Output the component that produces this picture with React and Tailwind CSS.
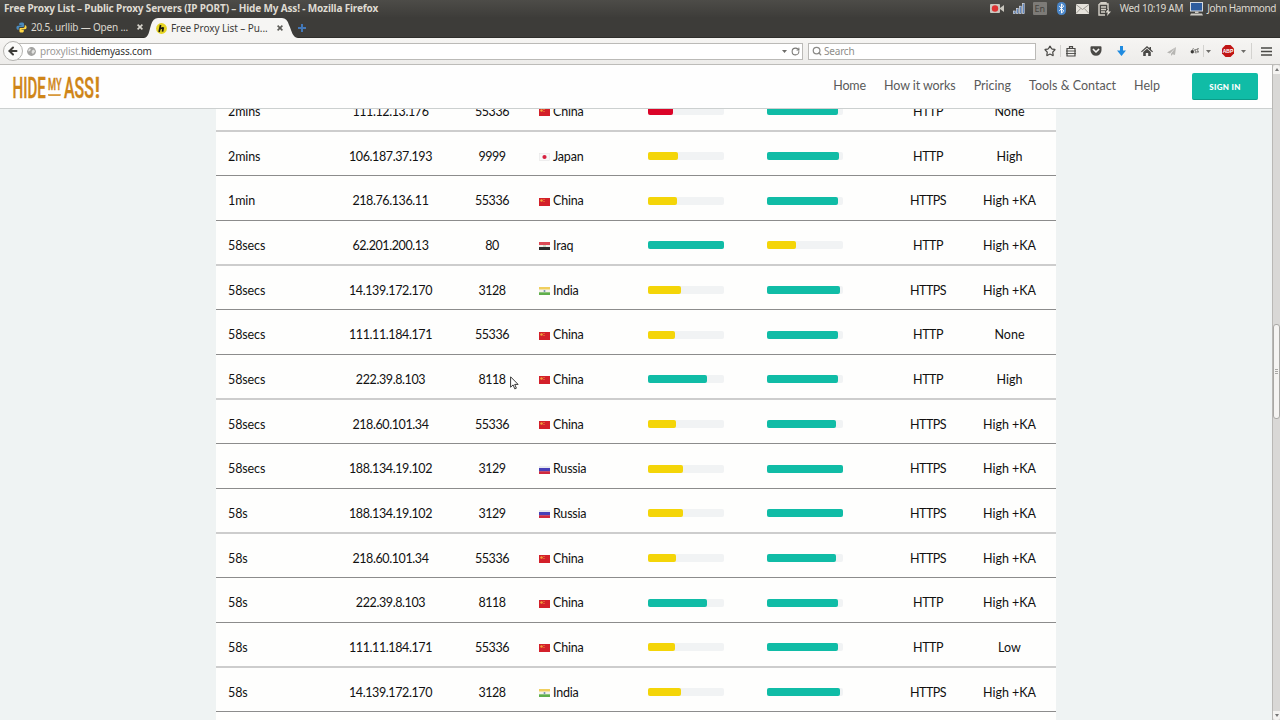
import { ArrowLeft, Search, Star, RotateCw } from "lucide-react";

const RED = "bg-[#db0428]";
const YELLOW = "bg-[#f4d508]";
const TEAL = "bg-[#10bca6]";

// first row of every group of three gets the lighter, thicker border
const LINE = "border-b border-[#8c8c8c]";
const THICK = "border-b-2 border-[#cdcdcd]";

const rows = [
  { age: "2mins", ip: "111.12.13.176", port: "55336", country: "China", speed: [RED, 25], conn: [TEAL, 71], type: "HTTP", anon: "None" },
  { age: "2mins", ip: "106.187.37.193", port: "9999", country: "Japan", speed: [YELLOW, 30], conn: [TEAL, 72], type: "HTTP", anon: "High" },
  { age: "1min", ip: "218.76.136.11", port: "55336", country: "China", speed: [YELLOW, 29], conn: [TEAL, 70.5], type: "HTTPS", anon: "High +KA" },
  { age: "58secs", ip: "62.201.200.13", port: "80", country: "Iraq", speed: [TEAL, 76], conn: [YELLOW, 28.5], type: "HTTP", anon: "High +KA" },
  { age: "58secs", ip: "14.139.172.170", port: "3128", country: "India", speed: [YELLOW, 32.5], conn: [TEAL, 72.5], type: "HTTPS", anon: "High +KA" },
  { age: "58secs", ip: "111.11.184.171", port: "55336", country: "China", speed: [YELLOW, 27], conn: [TEAL, 70.5], type: "HTTP", anon: "None" },
  { age: "58secs", ip: "222.39.8.103", port: "8118", country: "China", speed: [TEAL, 59], conn: [TEAL, 71], type: "HTTP", anon: "High" },
  { age: "58secs", ip: "218.60.101.34", port: "55336", country: "China", speed: [YELLOW, 28], conn: [TEAL, 69], type: "HTTPS", anon: "High +KA" },
  { age: "58secs", ip: "188.134.19.102", port: "3129", country: "Russia", speed: [YELLOW, 35], conn: [TEAL, 76], type: "HTTPS", anon: "High +KA" },
  { age: "58s", ip: "188.134.19.102", port: "3129", country: "Russia", speed: [YELLOW, 35], conn: [TEAL, 76], type: "HTTPS", anon: "High +KA" },
  { age: "58s", ip: "218.60.101.34", port: "55336", country: "China", speed: [YELLOW, 28], conn: [TEAL, 69], type: "HTTPS", anon: "High +KA" },
  { age: "58s", ip: "222.39.8.103", port: "8118", country: "China", speed: [TEAL, 59], conn: [TEAL, 71], type: "HTTP", anon: "High +KA" },
  { age: "58s", ip: "111.11.184.171", port: "55336", country: "China", speed: [YELLOW, 27], conn: [TEAL, 71], type: "HTTP", anon: "Low" },
  { age: "58s", ip: "14.139.172.170", port: "3128", country: "India", speed: [YELLOW, 32.5], conn: [TEAL, 72.5], type: "HTTPS", anon: "High +KA" },
];

export default function App() {
  return (
    <div className="relative flex h-[720px] w-[1280px] flex-col overflow-hidden bg-[#eff3f3]">
      <TitleBar />
      <TabStrip />
      <NavToolbar />
      <div className="flex min-h-0 flex-1">
        <div className="flex min-w-0 flex-1 flex-col">
          <SiteHeader />
          <ProxyTable />
        </div>
        <Scrollbar />
      </div>
      <Cursor />
    </div>
  );
}

/* Top panel: window title + indicators */
function TitleBar() {
  return (
    <div className="flex h-[17px] shrink-0 items-center justify-between bg-gradient-to-b from-[#4d4c48] to-[#3e3d3a] pr-1 pl-1 font-['Noto_Sans',sans-serif] text-[#dfdbd2]">
      <span className="whitespace-nowrap text-[10px] font-bold tracking-[-0.15px]">
        Free Proxy List – Public Proxy Servers (IP PORT) – Hide My Ass! - Mozilla Firefox
      </span>
      <div className="flex items-center text-[10px]">
        <svg className="mr-[9px] h-[11px] w-[14px]" viewBox="0 0 14 11">
          <rect x="0" y="1" width="10" height="9" rx="1" fill="#c9c6be" />
          <path d="M10 5l4-3v7l-4-3z" fill="#c9c6be" />
          <circle cx="5" cy="5.5" r="3.2" fill="#dd3131" />
        </svg>
        <svg className="mr-[8px] h-[11px] w-[12px]" viewBox="0 0 12 11">
          <g fill="#4f79b8" stroke="#d7dbe2" strokeWidth=".7">
            <rect x=".4" y="8" width="1.8" height="2.6" />
            <rect x="3.4" y="5.6" width="1.8" height="5" />
            <rect x="6.4" y="3.2" width="1.8" height="7.4" />
            <rect x="9.4" y=".6" width="1.8" height="10" />
          </g>
        </svg>
        <span className="mr-[10px] flex h-[13px] w-[14px] items-center justify-center rounded-[1px] bg-[#7d7b77] text-[9px] text-[#45443f]">En</span>
        <svg className="mr-[10px] h-[13px] w-[9px]" viewBox="0 0 10 13" preserveAspectRatio="none">
          <rect width="10" height="13" rx="4.5" fill="#4a86c8" />
          <path d="M2.500 4l5 5L5 11V2l2.500 2-5 5" fill="none" stroke="#fff" strokeWidth="1" />
        </svg>
        <svg className="mr-[9px] h-[10px] w-[13px]" viewBox="0 0 13 10">
          <rect width="13" height="10" rx=".5" fill="#e6e3dc" />
          <path d="M0 .5l6.500 5L13 .5M0 9.500l4.600-5M13 9.500l-4.600-5" fill="none" stroke="#8d8a83" strokeWidth=".8" />
        </svg>
        <svg className="mr-[8px] h-[14px] w-[14px]" viewBox="0 0 14 14">
          <path d="M3 1.500V.7h5v.8M1 2h9v5M1 2v11h6" fill="none" stroke="#d5d1c8" strokeWidth="1.4" />
          <path d="M3 5h5M3 7.500h5M3 10h4" stroke="#d5d1c8" strokeWidth="1.3" />
          <path d="M11 6L7.500 10.500h2.300L9 14l4-4.600h-2.400z" fill="#dfdbd2" />
        </svg>
        <span className="mr-[7px] whitespace-nowrap tracking-[-0.3px]">Wed 10:19 AM</span>
        <svg className="mr-[3px] h-[14px] w-[14px]" viewBox="0 0 14 14">
          <rect x=".5" y=".5" width="12" height="8.500" fill="#2e5c9e" stroke="#d7dbe2" />
          <path d="M5 9.500h3.500V11H5zM1 11.500h11l1 2H0z" fill="#cfccc5" />
        </svg>
        <span className="whitespace-nowrap tracking-[-0.42px]">John Hammond</span>
      </div>
    </div>
  );
}

function TabStrip() {
  return (
    <div className="flex h-[21px] shrink-0 items-end border-b border-[#2f2e2b] bg-[#3d3c39] font-['Noto_Sans',sans-serif] text-[10px]">
      <div className="flex h-[20px] w-[146px] items-center pl-[16px] text-[#dcd8d0]">
        <PythonIcon />
        <span className="ml-[4px] w-[106px] whitespace-nowrap tracking-[-0.17px]">20.5. urllib — Open ...</span>
        <CloseX className="text-[#d8d5cd]" />
      </div>
      <div className="relative -mb-px flex h-[20px] w-[150px] items-center pl-[10px] text-[#3c3b38]">
        <svg className="absolute top-0 -left-[2px] h-[20px] w-[154px]" viewBox="0 0 154 20">
          <path d="M0 20C5 19 5 13 7 7Q9 0 14 0H138Q143 0 145 7C148 13 148 19 154 20z" fill="#f6f5f3" />
        </svg>
        <svg className="relative h-[11px] w-[11px] shrink-0" viewBox="0 0 11 11">
          <circle cx="5.500" cy="5.500" r="5.400" fill="#e6d524" />
          <path d="M4.600 2L3.100 9M3.800 6.200Q6 4.400 7.200 5L6.500 8.600" fill="none" stroke="#1c1b10" strokeWidth="1.700" />
        </svg>
        <span className="relative ml-[4px] w-[106px] whitespace-nowrap tracking-[-0.08px]">Free Proxy List – Pu...</span>
        <CloseX className="relative text-[#5d5c58]" />
      </div>
      <svg className="mb-[5px] ml-[2px] h-[8px] w-[8px]" viewBox="0 0 8 8">
        <path d="M4 0v8M0 4h8" stroke="#4378b8" strokeWidth="2" />
      </svg>
    </div>
  );
}

function CloseX({ className }) {
  return (
    <svg className={`h-[6px] w-[6px] shrink-0 ${className}`} viewBox="0 0 6 6">
      <path d="M.6.6l4.800 4.800M5.400.6L.6 5.400" stroke="currentColor" strokeWidth="1.600" />
    </svg>
  );
}

function PythonIcon() {
  return (
    <svg className="h-[11px] w-[11px] shrink-0" viewBox="0 0 24 24">
      <path d="M11.900 1C7 1 7 3.200 7 4v3h5v1H4.500C1 8 1 11 1 12.500S1.500 17 4 17h2v-3c0-2 1.500-3 3-3h6c1.500 0 2.500-1 2.500-2.500V4c0-2-2-3-5.600-3z" fill="#4b8bbe" />
      <path d="M12.100 23c4.900 0 4.900-2.200 4.900-3v-3h-5v-1h7.500c3.500 0 3.500-3 3.500-4.500S22.500 7 20 7h-1v3c0 2-1.500 3-3 3h-6c-1.500 0-2.500 1-2.500 2.500V20c0 2 1 3 4.600 3z" fill="#ffd845" />
    </svg>
  );
}

/* Address bar, search box and add-on buttons */
function NavToolbar() {
  return (
    <div className="flex h-[27px] shrink-0 items-center border-b border-[#bdbcb9] bg-gradient-to-b from-[#f6f5f3] to-[#edecea] font-['Noto_Sans',sans-serif] text-[10px]">
      <div className="z-10 ml-[3px] flex h-[20px] w-[20px] shrink-0 items-center justify-center rounded-full border border-[#b3b2af] bg-[#fafaf9]">
        <ArrowLeft className="h-[12px] w-[12px] text-[#3c3b38]" strokeWidth={4} />
      </div>
      <div className="-ml-[6px] flex h-[17px] w-[786px] shrink-0 items-center border border-[#bbbab7] bg-white pl-[9px]">
        <svg className="h-[9px] w-[9px]" viewBox="0 0 9 9">
          <circle cx="4.500" cy="4.500" r="4.400" fill="#a3a3a1" />
          <path d="M2 1.500l2 .5-1 2-2 .5M5 3.500l2-1 1 2-2 2.500-1.500-1.500z" fill="#e2e2e0" />
        </svg>
        <span className="ml-[4px] tracking-[-0.17px] whitespace-nowrap text-[#9b9a97]">
          proxylist.<span className="text-[#333]">hidemyass.com</span>
        </span>
        <Caret className="ml-auto" />
        <RotateCw className="mr-[2px] ml-[4px] h-[9px] w-[9px] text-[#777673]" strokeWidth={2.8} />
      </div>
      <div className="ml-[5px] flex h-[17px] w-[228px] shrink-0 items-center border border-[#bbbab7] bg-white pl-[3px]">
        <Search className="h-[10px] w-[10px] text-[#8b8a87]" strokeWidth={3} />
        <span className="ml-[2px] tracking-[-0.2px] text-[#8e8d8a]">Search</span>
      </div>
      <Star className="ml-[8px] h-[12px] w-[12px] text-[#4a4946]" strokeWidth={2.4} />
      <div className="ml-[4px] h-[12px] w-px bg-[#d3d2cf]" />
      <svg className="ml-[5px] h-[11px] w-[10px]" viewBox="0 0 10 11">
        <path d="M3.500 2V.7h3V2M1 2.500h8v7.500H1z" fill="none" stroke="#4a4946" strokeWidth="1.200" />
        <path d="M0 5h10M0 7.500h10" stroke="#4a4946" strokeWidth=".9" />
      </svg>
      <svg className="ml-[14px] h-[10px] w-[12px]" viewBox="0 0 12 10">
        <path d="M1.500.3h9q1 0 1 1v3a5.500 5.500 0 01-11 0v-3q0-1 1-1z" fill="#4a4946" />
        <path d="M3.300 3.400L6 6l2.700-2.600" fill="none" stroke="#f3f2f0" strokeWidth="1.500" strokeLinecap="round" />
      </svg>
      <svg className="ml-[15px] h-[10px] w-[9px]" viewBox="0 0 9 10">
        <path d="M3 0h3v4.500h3L4.500 10 0 4.500h3z" fill="#1f8be0" />
      </svg>
      <svg className="ml-[15px] h-[10px] w-[12px]" viewBox="0 0 12 10">
        <path d="M6 0L0 5.500l.8.8L6 1.700l5.200 4.600.8-.8-2-1.900V1H8.500v1.300z" fill="#4a4946" />
        <path d="M2.200 6L6 2.700 9.800 6v4H7.200V7H4.800v3H2.200z" fill="#4a4946" />
      </svg>
      <svg className="ml-[14px] h-[9px] w-[9px]" viewBox="0 0 9 9">
        <path d="M9 0L0 5.500l3 1zM9 0L4 6.800V9l1.500-1.700L8 8z" fill="#b7b6b3" />
      </svg>
      <svg className="ml-[14px] h-[9px] w-[10px]" viewBox="0 0 10 9">
        <circle cx="2.300" cy="4.800" r="1.700" fill="#3b3a38" />
        <path d="M3.500 3.500l5.500-2M4.500 5.200l4.500-.7M2 2.500l2-1M5 2l1 4.500M7.500 1.500L8 6" stroke="#7f7e7b" strokeWidth=".9" />
      </svg>
      <div className="ml-[3px] h-[12px] w-px bg-[#d3d2cf]" />
      <Caret className="ml-[2px]" />
      <svg className="ml-[11px] h-[12px] w-[12px]" viewBox="0 0 12 12">
        <path d="M3.500 0h5L12 3.500v5L8.500 12h-5L0 8.500v-5z" fill="#c01414" />
        <text x="6" y="7.900" fontSize="5" fontWeight="700" textAnchor="middle" fill="#fff" fontFamily="Liberation Sans, sans-serif">ABP</text>
      </svg>
      <Caret className="ml-[7px]" />
      <div className="ml-[5px] h-[16px] w-px bg-[#d3d2cf]" />
      <svg className="ml-[9px] h-[9px] w-[11px]" viewBox="0 0 11 9">
        <path d="M0 1h11M0 4.500h11M0 8h11" stroke="#4a4946" strokeWidth="1.700" />
      </svg>
    </div>
  );
}

function Caret({ className }) {
  return (
    <svg className={`h-[3px] w-[5px] shrink-0 ${className}`} viewBox="0 0 5 3">
      <path d="M0 0h5L2.500 3z" fill="#6d6c69" />
    </svg>
  );
}

function SiteHeader() {
  return (
    <header className="z-10 flex h-[44px] shrink-0 items-center border-b border-[#ccd0d0] bg-[#fefefe] font-['Lato',sans-serif] text-[12.5px] text-[#5a5a5a]">
      {/* condensed wordmark, each word squeezed horizontally */}
      <svg className="ml-[12px] h-[42px] w-[92px]" viewBox="0 0 92 42" fill="#cf8517" stroke="#cf8517" strokeWidth=".4" fontFamily="Roboto, sans-serif" fontWeight="500">
        <text transform="translate(.5 32) scale(.52 1)" fontSize="29">HIDE</text>
        <text transform="translate(36 24) scale(.54 1)" fontSize="17">MY</text>
        <rect x="36.500" y="28.500" width="12" height="1.200" />
        <text transform="translate(52 32) scale(.55 1)" fontSize="29">ASS</text>
        <text transform="translate(82.500 32) scale(.75 1)" fontSize="29">!</text>
      </svg>
      <nav className="ml-auto flex gap-[18px] whitespace-nowrap pb-px">
        <a className="tracking-[-0.15px]">Home</a>
        <a className="tracking-[-0.08px]">How it works</a>
        <a>Pricing</a>
        <a>Tools &amp; Contact</a>
        <a>Help</a>
      </nav>
      <button className="mr-[14px] ml-[32px] h-[27px] w-[66px] rounded-[2px] border-b border-[#0c9c89] bg-[#10bca6] pt-px text-[8px] font-black tracking-[0.3px] text-white">
        SIGN IN
      </button>
    </header>
  );
}

function ProxyTable() {
  return (
    <div className="min-h-0 flex-1 overflow-hidden">
      <div className="-mt-[22px] ml-[216px] w-[840px] bg-[#fefefd] font-['Lato',sans-serif] text-[12.5px] text-[#111]">
        {rows.map((row, i) => (
          <div
            key={i}
            className={`grid grid-cols-[110px_129px_74px_119px_119px_126px_70px_93px] items-center pt-[5px] ${i % 3 === 0 ? THICK : LINE} ${i % 3 === 1 ? "h-[44px]" : "h-[45px]"}`}
          >
            <span className="pt-[2px] pl-[12px] tracking-[-0.1px]">{row.age}</span>
            <span className="pt-[2px] text-center tracking-[-0.4px]">{row.ip}</span>
            <span className="pt-[2px] text-center tracking-[-0.45px]">{row.port}</span>
            <span className="flex items-center pt-[2px] pl-[10px]">
              <Flag country={row.country} />
              <span className="ml-[3px] tracking-[-0.2px]">{row.country}</span>
            </span>
            <Bar color={row.speed[0]} width={row.speed[1]} />
            <Bar color={row.conn[0]} width={row.conn[1]} />
            <span className="pt-[2px] text-center tracking-[-0.5px]">{row.type}</span>
            <span className="pt-[2px] text-center">{row.anon}</span>
          </div>
        ))}
        <div className="h-[20px]" />
      </div>
    </div>
  );
}

function Bar({ color, width }) {
  return (
    <div className="h-[8px] w-[76px] rounded-[2px] bg-[#f1f3f4]">
      <div className={`h-full rounded-[2px] ${color}`} style={{ width }} />
    </div>
  );
}

function Flag({ country }) {
  return (
    <svg className="h-[8px] w-[11px] shrink-0" viewBox="0 0 11 8">
      {country === "China" && (
        <>
          <rect width="11" height="8" fill="#d3202a" />
          <circle cx="2.500" cy="2.500" r="1.200" fill="#f3a73c" />
          <circle cx="5" cy="1.500" r=".6" fill="#f3a73c" />
          <circle cx="5" cy="3.500" r=".6" fill="#f3a73c" />
        </>
      )}
      {country === "Japan" && (
        <>
          <rect x=".5" y=".5" width="10" height="7" fill="#f8f8f8" stroke="#e6e6e6" strokeWidth=".6" />
          <circle cx="5.500" cy="4" r="2.100" fill="#d6213f" />
        </>
      )}
      {country === "Iraq" && (
        <>
          <rect width="11" height="3" fill="#dc4a55" />
          <rect y="3" width="11" height="2" fill="#f1efec" />
          <rect y="5" width="11" height="3" fill="#2a2a2a" />
          <rect x="4" y="3.500" width="3" height="1" fill="#a9c79f" />
        </>
      )}
      {country === "India" && (
        <>
          <rect width="11" height="2.700" fill="#f0cf5e" />
          <rect y="2.700" width="11" height="2.600" fill="#f3f2ea" />
          <rect y="5.300" width="11" height="2.700" fill="#5fae4b" />
          <circle cx="5.500" cy="4" r="1" fill="#6f8fae" />
        </>
      )}
      {country === "Russia" && (
        <>
          <rect width="11" height="2.500" fill="#e9e9ef" />
          <rect y="2" width="11" height="3.500" fill="#4740b8" />
          <rect y="5.300" width="11" height="2.700" fill="#d02a3e" />
        </>
      )}
    </svg>
  );
}

function Scrollbar() {
  return (
    <div className="flex w-[8px] shrink-0 flex-col items-center border-l border-[#b9b8b5] bg-[#d9d8d6]">
      <div className="flex h-[9px] w-full items-center justify-center rounded-t-[3px] bg-[#f4f3f1]">
        <svg className="h-[3px] w-[4px]" viewBox="0 0 4 3"><path d="M0 3h4L2 0z" fill="#777" /></svg>
      </div>
      <div className="mt-[250px] flex h-[95px] w-full flex-col items-center justify-center gap-[1px] rounded-[3px] border border-[#a9a8a5] bg-[#f5f4f2]">
        <div className="h-px w-[3px] bg-[#a9a8a5]" />
        <div className="h-px w-[3px] bg-[#a9a8a5]" />
        <div className="h-px w-[3px] bg-[#a9a8a5]" />
      </div>
      <div className="mt-auto flex h-[9px] w-full items-center justify-center rounded-b-[3px] bg-[#f4f3f1]">
        <svg className="h-[3px] w-[4px]" viewBox="0 0 4 3"><path d="M0 0h4L2 3z" fill="#777" /></svg>
      </div>
    </div>
  );
}

function Cursor() {
  return (
    <svg className="absolute top-[376px] left-[510px] h-[14px] w-[9px]" viewBox="0 0 9 14">
      <path d="M.6 .8v10.400l2.500-2.300 1.700 4 1.600-.7-1.700-3.800h3.400z" fill="#fff" stroke="#222" strokeWidth=".9" />
    </svg>
  );
}
